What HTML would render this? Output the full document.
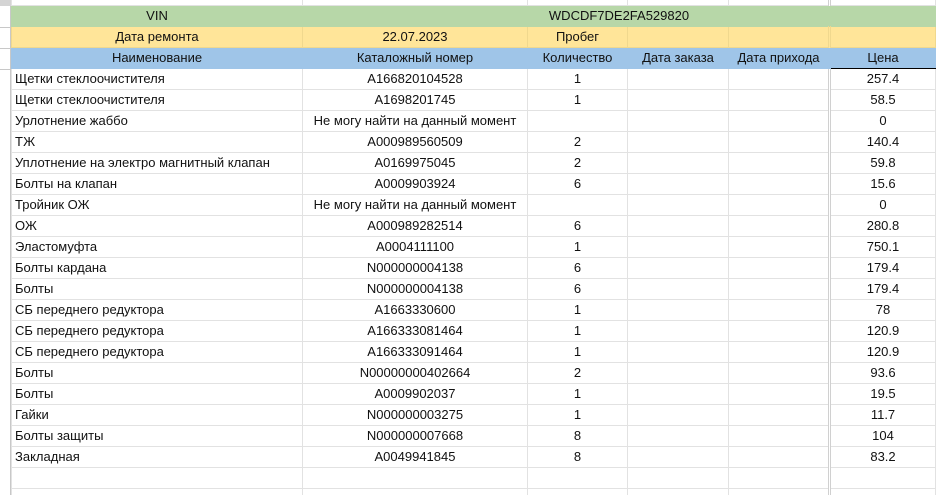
<!DOCTYPE html>
<html><head><meta charset="utf-8"><style>
html,body{margin:0;padding:0;background:#fff;width:942px;height:495px;overflow:hidden}
body{font-family:"Liberation Sans",Arial,sans-serif;font-size:13px;color:#111;position:relative}
.lh{position:absolute;left:0;top:0;width:11px;height:495px;background:#fff;border-right:1px solid #c8c8c8;box-sizing:border-box}
.corner{position:absolute;left:0;top:0;width:11px;height:6px;background:#d4d4d4}
table{position:absolute;left:11px;top:-16px;border-collapse:collapse;table-layout:fixed}
td{height:20px;padding:0 3px;border:1px solid #e2e2e2;white-space:nowrap;overflow:visible;text-align:center;line-height:20px}
td.l{text-align:left;padding-left:3px}
tr.g td{background:#b7d7a8;border-color:#b7d7a8}
tr.y td{background:#ffe599;border-color:#f0d88e}
tr.b td{background:#9fc5e8;border-color:#9fc5e8}
tr.b td.p{border-bottom:1px solid #000}
td.p{border-left:3px double #d0d0d0}
.rl{position:absolute;left:0;width:11px;height:1px;background:#c8c8c8}
</style></head><body>
<div class="lh"></div>
<div class="corner"></div>
<div class="rl" style="top:27px"></div><div class="rl" style="top:48px"></div><div class="rl" style="top:69px"></div>
<table>
<colgroup><col style="width:291px"><col style="width:225px"><col style="width:100px"><col style="width:101px"><col style="width:101px"><col style="width:106px"></colgroup>
<tr><td></td><td></td><td></td><td></td><td></td><td class="p"></td></tr>
<tr class="g"><td>VIN</td><td colspan="5">WDCDF7DE2FA529820</td></tr>
<tr class="y"><td>Дата ремонта</td><td>22.07.2023</td><td>Пробег</td><td></td><td></td><td class="p"></td></tr>
<tr class="b"><td>Наименование</td><td>Каталожный номер</td><td>Количество</td><td>Дата заказа</td><td>Дата прихода</td><td class="p">Цена</td></tr>
<tr><td class="l">Щетки стеклоочистителя</td><td>A166820104528</td><td>1</td><td></td><td></td><td class="p">257.4</td></tr>
<tr><td class="l">Щетки стеклоочистителя</td><td>A1698201745</td><td>1</td><td></td><td></td><td class="p">58.5</td></tr>
<tr><td class="l">Урлотнение жаббо</td><td>Не могу найти на данный момент</td><td></td><td></td><td></td><td class="p">0</td></tr>
<tr><td class="l">ТЖ</td><td>A000989560509</td><td>2</td><td></td><td></td><td class="p">140.4</td></tr>
<tr><td class="l">Уплотнение на электро магнитный клапан</td><td>A0169975045</td><td>2</td><td></td><td></td><td class="p">59.8</td></tr>
<tr><td class="l">Болты на клапан</td><td>A0009903924</td><td>6</td><td></td><td></td><td class="p">15.6</td></tr>
<tr><td class="l">Тройник ОЖ</td><td>Не могу найти на данный момент</td><td></td><td></td><td></td><td class="p">0</td></tr>
<tr><td class="l">ОЖ</td><td>A000989282514</td><td>6</td><td></td><td></td><td class="p">280.8</td></tr>
<tr><td class="l">Эластомуфта</td><td>A0004111100</td><td>1</td><td></td><td></td><td class="p">750.1</td></tr>
<tr><td class="l">Болты кардана</td><td>N000000004138</td><td>6</td><td></td><td></td><td class="p">179.4</td></tr>
<tr><td class="l">Болты</td><td>N000000004138</td><td>6</td><td></td><td></td><td class="p">179.4</td></tr>
<tr><td class="l">СБ переднего редуктора</td><td>A1663330600</td><td>1</td><td></td><td></td><td class="p">78</td></tr>
<tr><td class="l">СБ переднего редуктора</td><td>A166333081464</td><td>1</td><td></td><td></td><td class="p">120.9</td></tr>
<tr><td class="l">СБ переднего редуктора</td><td>A166333091464</td><td>1</td><td></td><td></td><td class="p">120.9</td></tr>
<tr><td class="l">Болты</td><td>N00000000402664</td><td>2</td><td></td><td></td><td class="p">93.6</td></tr>
<tr><td class="l">Болты</td><td>A0009902037</td><td>1</td><td></td><td></td><td class="p">19.5</td></tr>
<tr><td class="l">Гайки</td><td>N000000003275</td><td>1</td><td></td><td></td><td class="p">11.7</td></tr>
<tr><td class="l">Болты защиты</td><td>N000000007668</td><td>8</td><td></td><td></td><td class="p">104</td></tr>
<tr><td class="l">Закладная</td><td>A0049941845</td><td>8</td><td></td><td></td><td class="p">83.2</td></tr>
<tr><td></td><td></td><td></td><td></td><td></td><td class="p"></td></tr>
<tr><td></td><td></td><td></td><td></td><td></td><td class="p"></td></tr>
</table>
</body></html>
